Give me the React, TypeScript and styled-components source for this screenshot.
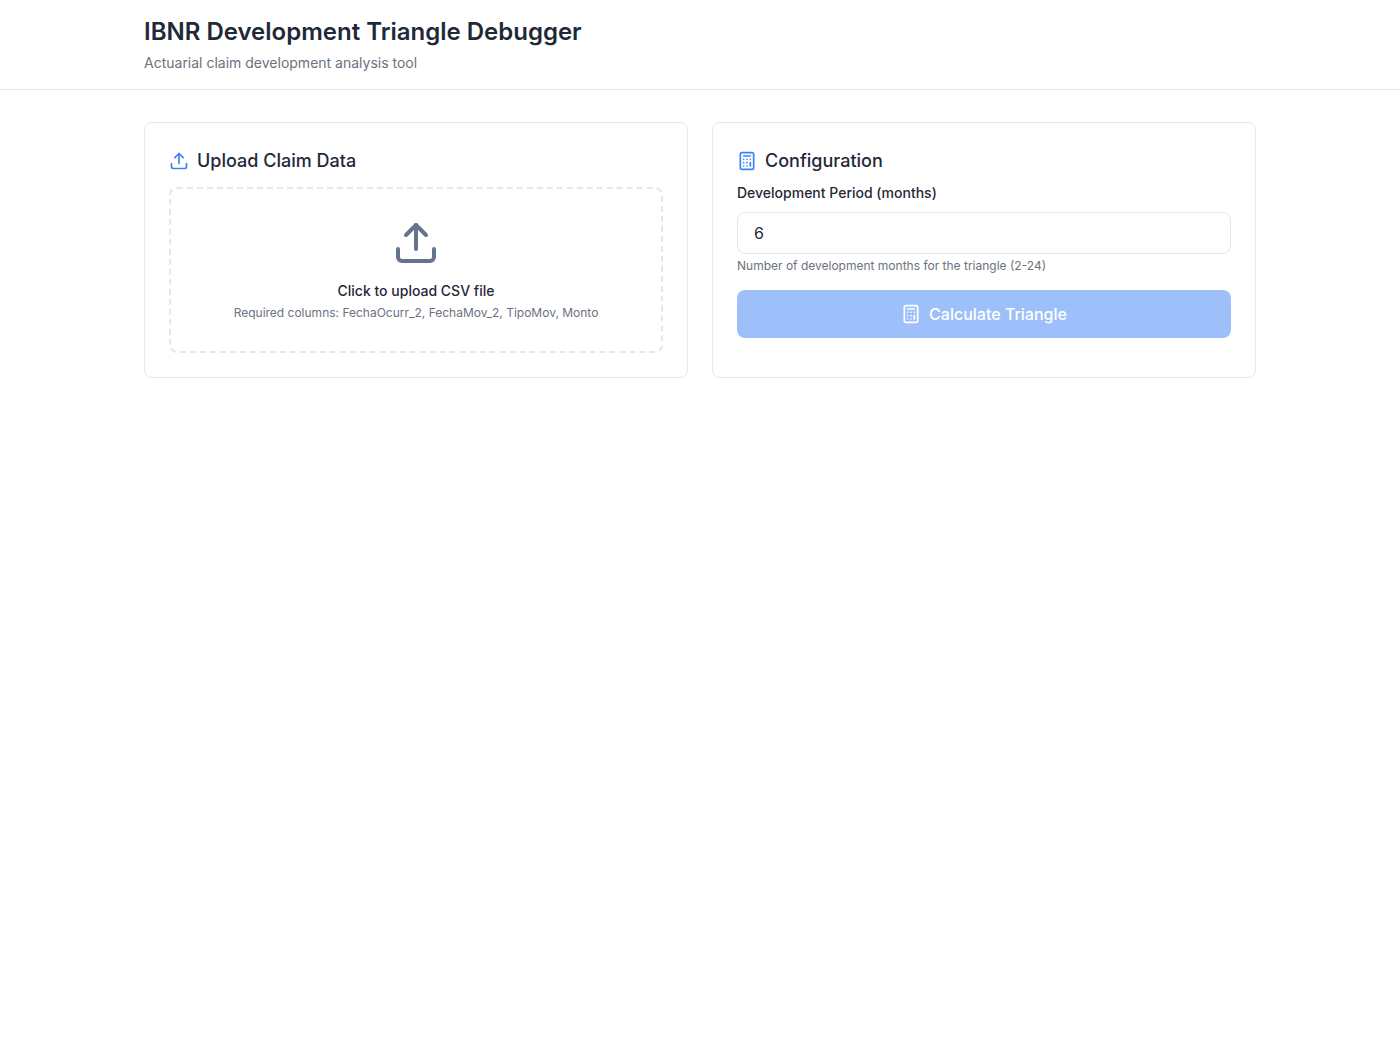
import React from "react";
import styled, { createGlobalStyle } from "styled-components";
import { Upload, Calculator } from "lucide-react";

const Global = createGlobalStyle`
  body { margin: 0; font-family: Inter, "Noto Sans", sans-serif; background: #fff; color: #1f2937; }
  * { box-sizing: border-box; }
`;
const Header = styled.header`
  border-bottom: 1px solid #e5e7eb;
  padding: 16px 0 16px;
`;
const Container = styled.div`
  max-width: 1280px; margin: 0 auto; padding: 0 84px;
`;
const Title = styled.h1`
  margin: 0; font-size: 24px; line-height: 32px; font-weight: 600; color: #1f2937;
`;
const Sub = styled.p`
  margin: 5px 0 0; font-size: 14px; line-height: 20px; color: #6b7280;
`;
const Grid = styled.div`
  display: grid; grid-template-columns: 1fr 1fr; gap: 24px; margin-top: 32px;
`;
const Card = styled.section`
  border: 1px solid #e5e7eb; border-radius: 8px; padding: 24px; display: flex; flex-direction: column;
`;
const CardTitle = styled.h2`
  margin: 0 0 12px; display: flex; align-items: center; gap: 8px;
  font-size: 18px; line-height: 28px; font-weight: 500; color: #1f2937;
  svg { color: #3b82f6; }
`;
const Drop = styled.div`
  border: 2px dashed #e5e7eb; border-radius: 8px; height: 166px;
  display: flex; flex-direction: column; align-items: center; justify-content: center;
  svg { color: #64748b; margin-bottom: 14px; }
`;
const DropText = styled.div`
  font-size: 14px; font-weight: 500; line-height: 20px; color: #1f2937;
`;
const DropSub = styled.div`
  font-size: 12px; line-height: 16px; color: #6b7280; margin-top: 4px;
`;
const Label = styled.label`
  font-size: 14px; font-weight: 500; line-height: 20px; color: #1f2937; margin-top: -4px;
`;
const Input = styled.input`
  margin-top: 9px; height: 42px; border: 1px solid #e5e7eb; border-radius: 8px;
  padding: 0 16px; font-size: 16px; font-family: inherit; color: #1f2937; outline: none;
`;
const Help = styled.div`
  font-size: 12px; line-height: 16px; color: #6b7280; margin-top: 4px;
`;
const Button = styled.button`
  margin-top: 16px; height: 48px; border: none; border-radius: 8px; background: #9dc0fa;
  color: #fff; font-family: inherit; font-size: 16px; font-weight: 500;
  display: flex; align-items: center; justify-content: center; gap: 8px;
`;

export default function App() {
  return (
    <>
      <Global />
      <Header>
        <Container>
          <Title>IBNR Development Triangle Debugger</Title>
          <Sub>Actuarial claim development analysis tool</Sub>
        </Container>
      </Header>
      <Container>
        <Grid>
          <Card>
            <CardTitle><Upload size={20} />Upload Claim Data</CardTitle>
            <Drop>
              <Upload size={48} strokeWidth={2} />
              <DropText>Click to upload CSV file</DropText>
              <DropSub>Required columns: FechaOcurr_2, FechaMov_2, TipoMov, Monto</DropSub>
            </Drop>
          </Card>
          <Card>
            <CardTitle><Calculator size={20} />Configuration</CardTitle>
            <Label>Development Period (months)</Label>
            <Input defaultValue="6" />
            <Help>Number of development months for the triangle (2-24)</Help>
            <Button><Calculator size={20} />Calculate Triangle</Button>
          </Card>
        </Grid>
      </Container>
    </>
  );
}
